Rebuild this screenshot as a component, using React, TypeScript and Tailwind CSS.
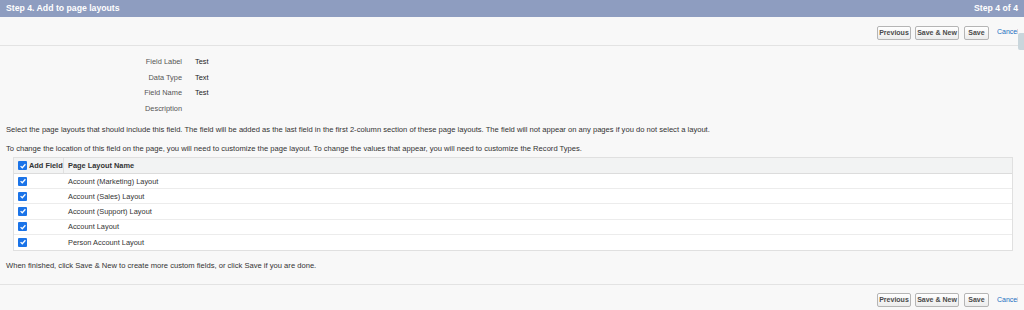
import React from 'react';

const layouts = [
  'Account (Marketing) Layout',
  'Account (Sales) Layout',
  'Account (Support) Layout',
  'Account Layout',
  'Person Account Layout',
];

const fields: [string, string][] = [
  ['Field Label', 'Test'],
  ['Data Type', 'Text'],
  ['Field Name', 'Test'],
  ['Description', ''],
];

const Check: React.FC = () => (
  <span className="inline-flex h-[9px] w-[9px] shrink-0 items-center justify-center rounded-[1px] bg-[#1a73e8]">
    <svg viewBox="0 0 10 10" className="h-[8px] w-[8px]">
      <path d="M2 5.2 L4.1 7.2 L8 2.8" fill="none" stroke="white" strokeWidth="1.6" />
    </svg>
  </span>
);

const Btn: React.FC<{ label: string; w: string }> = ({ label, w }) => (
  <button
    className={`h-[14px] ${w} rounded-[2px] border border-[#b5b5b5] bg-gradient-to-b from-white to-[#ececec] text-[7px] font-bold leading-none whitespace-nowrap text-[#4a4a4a]`}
  >
    {label}
  </button>
);

const ButtonRow: React.FC = () => (
  <div className="flex items-center justify-end pr-[6px]">
    <Btn label="Previous" w="w-[34px]" />
    <div className="ml-[4px]">
      <Btn label="Save & New" w="w-[44px]" />
    </div>
    <div className="ml-[5px]">
      <Btn label="Save" w="w-[25px]" />
    </div>
    <a className="ml-[8px] w-[21px] overflow-hidden text-[7px] text-[#1a6fc1]">Cancel</a>
  </div>
);

export default function App() {
  return (
    <div
      className="relative h-[310px] w-full overflow-hidden bg-[#f8f8f8] text-[7.6px] text-[#333]"
      style={{ fontFamily: '"Liberation Sans", Arial, sans-serif' }}
    >
      {/* title bar */}
      <div className="flex h-[17px] items-center justify-between bg-[#8e9dc0] px-[6px] text-[8.7px] font-bold text-white">
        <span>Step 4. Add to page layouts</span>
        <span>Step 4 of 4</span>
      </div>

      <div className="flex h-[29px] items-center border-b border-[#e3e3e3] pt-[3px]">
        <div className="w-full">
          <ButtonRow />
        </div>
      </div>

      {/* side tab */}
      <div className="absolute right-0 top-[33px] h-[17px] w-[6px] rounded-l-[2px] bg-[#c9d6dc]" />

      {/* field summary */}
      <div className="mt-[8px] flex flex-col text-[7.4px]">
        {fields.map(([k, v]) => (
          <div key={k} className="flex h-[15.5px] items-center">
            <span className="w-[182px] text-right text-[#555]">{k}</span>
            <span className="ml-[13px] text-[#222]">{v}</span>
          </div>
        ))}
      </div>

      <p className="mt-[9px] pl-[6px] leading-[9px]">
        Select the page layouts that should include this field. The field will be added as the last field in the
        first 2-column section of these page layouts. The field will not appear on any pages if you do not select a
        layout.
      </p>
      <p className="mt-[10px] pl-[6px] leading-[9px]">
        To change the location of this field on the page, you will need to customize the page layout. To change the
        values that appear, you will need to customize the Record Types.
      </p>

      {/* layouts table */}
      <div className="ml-[13px] mt-[4px] w-[1000px] border border-[#e0e0e0] bg-white text-[7.4px]">
        <div className="flex h-[16px] items-center border-b border-[#dcdcdc] bg-[#f2f3f3]">
          <div className="flex h-full w-[50px] shrink-0 items-center gap-[2px] whitespace-nowrap border-r border-[#e0e0e0] pl-[4px] font-bold">
            <Check />
            <span>Add Field</span>
          </div>
          <span className="pl-[4px] font-bold">Page Layout Name</span>
        </div>
        {layouts.map((name, i) => (
          <div
            key={name}
            className={`flex h-[15.2px] items-center ${i < layouts.length - 1 ? 'border-b border-[#ececec]' : ''}`}
          >
            <div className="flex w-[50px] shrink-0 items-center pl-[4px]">
              <Check />
            </div>
            <span className="pl-[4px]">{name}</span>
          </div>
        ))}
      </div>

      <p className="mt-[10px] pl-[6px] leading-[9px]">
        When finished, click Save &amp; New to create more custom fields, or click Save if you are done.
      </p>

      <div className="mt-[14px] border-t border-[#e3e3e3] pt-[8px]">
        <ButtonRow />
      </div>
    </div>
  );
}
